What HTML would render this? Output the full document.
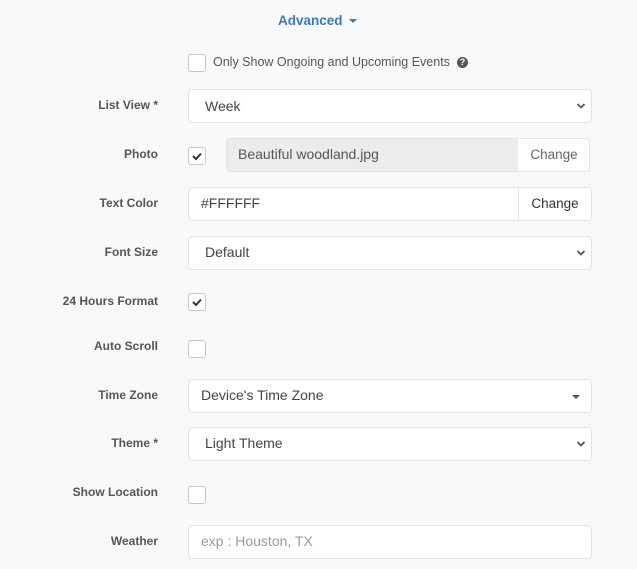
<!DOCTYPE html>
<html><head><meta charset="utf-8"><style>
*{box-sizing:border-box;margin:0;padding:0}
body{width:637px;height:569px;background:#f8f9fb;font-family:"Liberation Sans",sans-serif;position:relative;overflow:hidden}
.a{position:absolute}
.lbl{position:absolute;right:479px;font-size:12px;font-weight:bold;color:#555;white-space:nowrap}
.box{position:absolute;left:188px;width:404px;height:34px;background:#fff;border:1px solid #e1e3e6;border-radius:4px;font-size:14px;color:#444;line-height:32px;padding-left:16px}
.cb{position:absolute;left:188px;width:18px;height:18px;background:#fff;border:1px solid #c4c6ca;border-radius:3px}
.chev{position:absolute;right:5px;top:12px}
</style></head><body>
<div class="a" style="left:278px;top:13px;font-size:13.5px;font-weight:bold;color:#3a7bbf">Advanced</div>
<div class="a" style="left:349px;top:19px;width:0;height:0;border-left:4px solid transparent;border-right:4px solid transparent;border-top:4px solid #3a7bbf"></div>

<div class="cb" style="top:54px"></div>
<div class="a" style="left:213px;top:55px;font-size:12.5px;color:#555">Only Show Ongoing and Upcoming Events</div>
<div class="a" style="left:457px;top:57px;width:11px;height:11px;border-radius:50%;background:#555;color:#fff;font-size:9px;font-weight:bold;text-align:center;line-height:11px">?</div>

<div class="lbl" style="top:98px">List View *</div>
<div class="box" style="top:89px">Week<svg class="chev" width="10" height="8" viewBox="0 0 10 8"><path d="M1.5 2l3.5 3.5L8.5 2" fill="none" stroke="#555" stroke-width="1.8"/></svg></div>

<div class="lbl" style="top:147px">Photo</div>
<div class="cb" style="top:147px"><svg width="16" height="16" viewBox="0 0 16 16"><path d="M4 8l3 3 5-5.5" fill="none" stroke="#333" stroke-width="2"/></svg></div>
<div class="a" style="left:226px;top:138px;width:364px;height:34px;border:1px solid #e1e3e6;border-radius:4px;background:#fff;overflow:hidden">
<div class="a" style="left:0;top:0;width:291px;height:32px;background:#ececec;font-size:14px;color:#555;line-height:31px;padding-left:11px">Beautiful woodland.jpg</div>
<div class="a" style="left:291px;top:0;width:72px;height:32px;font-size:13.5px;color:#666;line-height:31px;text-align:center">Change</div></div>

<div class="lbl" style="top:196px">Text Color</div>
<div class="box" style="top:187px;padding-left:12px;color:#444;line-height:31px">#FFFFFF
<div class="a" style="left:329px;top:0;width:73px;height:32px;border-left:1px solid #e1e3e6;text-align:center;color:#333;font-size:13.5px">Change</div></div>

<div class="lbl" style="top:245px">Font Size</div>
<div class="box" style="top:236px;line-height:31px">Default<svg class="chev" width="10" height="8" viewBox="0 0 10 8"><path d="M1.5 2l3.5 3.5L8.5 2" fill="none" stroke="#555" stroke-width="1.8"/></svg></div>

<div class="lbl" style="top:294px">24 Hours Format</div>
<div class="cb" style="top:293px"><svg width="16" height="16" viewBox="0 0 16 16"><path d="M4 8l3 3 5-5.5" fill="none" stroke="#333" stroke-width="2"/></svg></div>

<div class="lbl" style="top:339px">Auto Scroll</div>
<div class="cb" style="top:340px"></div>

<div class="lbl" style="top:388px">Time Zone</div>
<div class="box" style="top:379px;padding-left:12px;line-height:31px">Device's Time Zone<div class="a" style="right:11px;top:15px;width:0;height:0;border-left:4px solid transparent;border-right:4px solid transparent;border-top:4px solid #555"></div></div>

<div class="lbl" style="top:436px">Theme *</div>
<div class="box" style="top:427px;line-height:31px">Light Theme<svg class="chev" width="10" height="8" viewBox="0 0 10 8"><path d="M1.5 2l3.5 3.5L8.5 2" fill="none" stroke="#555" stroke-width="1.8"/></svg></div>

<div class="lbl" style="top:485px">Show Location</div>
<div class="cb" style="top:486px"></div>

<div class="lbl" style="top:534px">Weather</div>
<div class="box" style="top:525px;padding-left:12px;color:#999;line-height:31px">exp : Houston, TX</div>
</body></html>
